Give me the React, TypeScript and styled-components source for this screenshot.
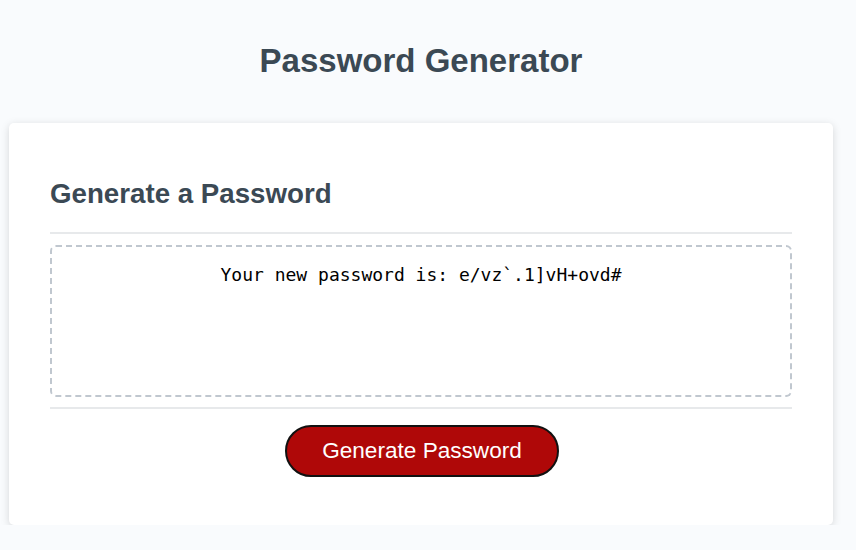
import React from 'react'
import styled, { createGlobalStyle } from 'styled-components'

const GlobalStyle = createGlobalStyle`
  html, body {
    margin: 0;
    padding: 0;
    background: #f9fbfd;
    font-family: 'Liberation Sans', Arial, sans-serif;
  }
`

const Wrapper = styled.div`
  width: 824px;
  margin-left: 9px;
  padding-top: 42px;
`

const Header = styled.header`
  text-align: center;
  color: hsl(206, 17%, 28%);
`

const Title = styled.h1`
  margin: 0;
  font-size: 33px;
  line-height: 38px;
  font-weight: 700;
`

const Card = styled.section`
  margin-top: 43px;
  background: #fff;
  border-radius: 5px;
  box-shadow: rgba(0, 0, 0, 0.15) 0 2px 8px 0;
  color: hsl(206, 17%, 28%);
  padding: 55px 41px 0 41px;
  box-sizing: border-box;
  height: 402px;
`

const Divider = styled.div`
  height: 2px;
  width: 100%;
  background: #e7e9eb;
`

const CardTitle = styled.h2`
  margin: 0 0 23px 0;
  font-size: 27.7px;
  line-height: 31px;
  font-weight: 700;
`

const PasswordBox = styled.div`
  box-sizing: border-box;
  height: 152px;
  margin: 11px 0 10px;
  padding: 17px 15px 0;
  border: 2px dashed #c0c7cf;
  border-radius: 6px;
  text-align: center;
  font-family: 'DejaVu Sans Mono', monospace;
  font-size: 18px;
  line-height: 21px;
  color: #000;
`

const Footer = styled.div`
  display: flex;
  justify-content: center;
  padding-top: 16px;
`

const Button = styled.button`
  border: 2px solid #111;
  background: #af0808;
  color: #fff;
  border-radius: 26px;
  font-family: 'Liberation Sans', Arial, sans-serif;
  font-size: 22.6px;
  line-height: 22px;
  white-space: nowrap;
  padding: 13px 35px;
  margin-left: 2px;
  cursor: pointer;
  height: 52px;
`

export default function App() {
  return (
    <>
      <GlobalStyle />
      <Wrapper>
        <Header>
          <Title>Password Generator</Title>
        </Header>
        <Card>
          <CardTitle>Generate a Password</CardTitle>
          <Divider />
          <PasswordBox>Your new password is: e/vz`.1]vH+ovd#</PasswordBox>
          <Divider />
          <Footer>
            <Button>Generate Password</Button>
          </Footer>
        </Card>
      </Wrapper>
    </>
  )
}
